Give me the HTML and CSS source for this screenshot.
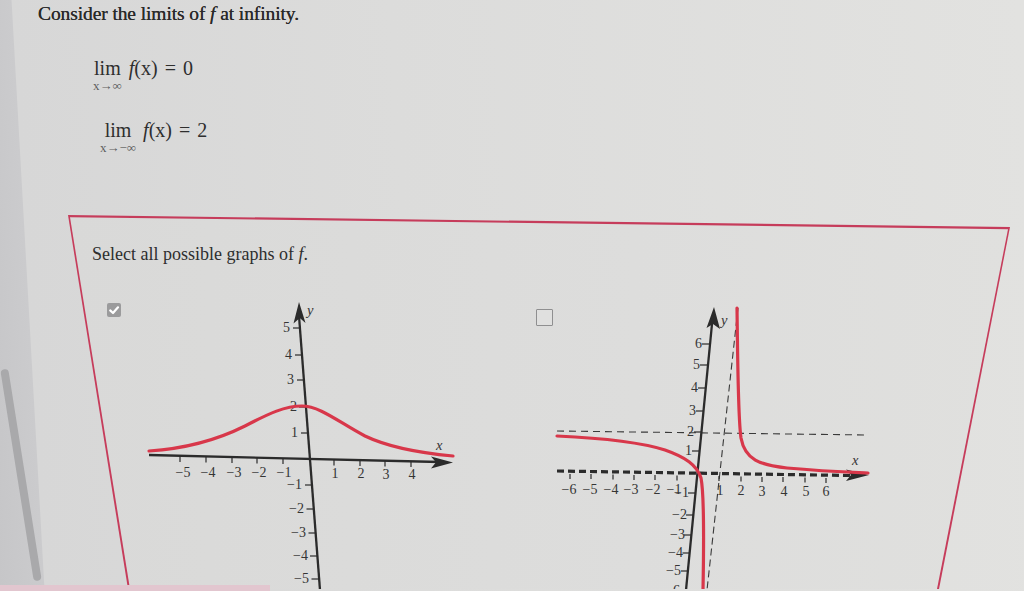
FILE: index.html
```html
<!DOCTYPE html>
<html>
<head>
<meta charset="utf-8">
<link rel="stylesheet" href="styles.css">
</head>
<body>
<div class="screen">
  <aside class="sidebar"><div class="thumb"></div></aside>
  <main class="main">
    <p class="title">Consider the limits of <i>f</i> at infinity.</p>
    <div class="limit l1">
      <span class="lim"><span class="lim-word">lim</span><span class="sub">x→∞</span></span>
      <span class="expr"><i>f</i>(x) = 0</span>
    </div>
    <div class="limit l2">
      <span class="lim"><span class="lim-word">lim</span><span class="sub">x→−∞</span></span>
      <span class="expr"><i>f</i>(x) = 2</span>
    </div>
    <section class="box">
      <p class="prompt">Select all possible graphs of <i>f</i>.</p>
      <div class="options">
        <div class="option o1">
          <span class="cb checked"><svg viewBox="0 0 14 14" width="14" height="14"><path d="M3.2 7.4 L6 10 L11 4.3" fill="none" stroke="#fff" stroke-width="2.2" stroke-linecap="round" stroke-linejoin="round"/></svg></span>
          <svg class="graph" viewBox="140 295 330 296" width="330" height="296">
            <g stroke="#2b2b2b" fill="#2b2b2b">
              <line x1="299" y1="318" x2="320" y2="592" stroke-width="2.3"/>
              <path d="M299,304 L305.5,325 L299.8,320 L293.5,325.5 Z" stroke="none"/>
              <line x1="149" y1="457" x2="440" y2="464" stroke-width="2.3"/>
              <path d="M453,464.5 L431,458.5 L436,464.2 L431,470.5 Z" stroke="none"/>
              <g stroke-width="1.2">
                <line x1="180" y1="458" x2="180" y2="464"/>
                <line x1="206" y1="458.5" x2="206" y2="464.5"/>
                <line x1="232" y1="459" x2="232" y2="465"/>
                <line x1="257" y1="459.5" x2="257" y2="465.5"/>
                <line x1="283" y1="460" x2="283" y2="466"/>
                <line x1="334" y1="461.5" x2="334" y2="467.5"/>
                <line x1="360" y1="462" x2="360" y2="468"/>
                <line x1="385" y1="462.5" x2="385" y2="468.5"/>
                <line x1="411" y1="463" x2="411" y2="469"/>
                <line x1="293" y1="330" x2="301" y2="330"/>
                <line x1="295" y1="357" x2="302.5" y2="357"/>
                <line x1="297" y1="382" x2="304.5" y2="382"/>
                <line x1="299" y1="409" x2="306.5" y2="409"/>
                <line x1="301" y1="435" x2="308.5" y2="435"/>
                <line x1="305" y1="487" x2="312.5" y2="487"/>
                <line x1="306.5" y1="511" x2="314" y2="511"/>
                <line x1="308.5" y1="535" x2="316" y2="535"/>
                <line x1="310" y1="558" x2="317.5" y2="558"/>
                <line x1="311.5" y1="581" x2="319" y2="581"/>
              </g>
            </g>
            <g text-anchor="middle">
              <text x="183" y="479">−5</text>
              <text x="208" y="479">−4</text>
              <text x="234" y="479">−3</text>
              <text x="259" y="479">−2</text>
              <text x="284" y="479">−1</text>
              <text x="335" y="480">1</text>
              <text x="361" y="480">2</text>
              <text x="386" y="481">3</text>
              <text x="412" y="481">4</text>
            </g>
            <g text-anchor="end">
              <text x="290" y="334">5</text>
              <text x="292" y="361">4</text>
              <text x="294" y="386">3</text>
              <text x="297" y="413">2</text>
              <text x="298" y="439">1</text>
              <text x="302" y="491">−1</text>
              <text x="304" y="515">−2</text>
              <text x="306" y="539">−3</text>
              <text x="308" y="562">−4</text>
              <text x="309" y="585">−5</text>
            </g>
            <text class="it" x="307" y="317">y</text>
            <text class="it" x="436" y="452">x</text>
            <path d="M149,453 C180,451 215,443 245,428 C270,415 285,408 302,408 C320,408 340,425 365,438 C390,450 420,455 453,458" fill="none" stroke="#d8374a" stroke-width="3.2" stroke-linecap="round"/>
          </svg>
        </div>
        <div class="option o2">
          <span class="cb"></span>
          <svg class="graph" viewBox="553 295 330 296" width="330" height="296">
            <g stroke="#3a3a3a" fill="none" stroke-width="1.1">
              <line x1="738" y1="310" x2="707" y2="592" stroke-dasharray="7 4"/>
              <line x1="557" y1="433" x2="868" y2="437" stroke-dasharray="7 5"/>
            </g>
            <g stroke="#2b2b2b" fill="#2b2b2b">
              <line x1="712" y1="326" x2="686" y2="592" stroke-width="2.3"/>
              <path d="M714,309 L720,331 L713,326 L706.5,330 Z" stroke="none"/>
              <line x1="557" y1="473" x2="850" y2="477.5" stroke-width="3.2" stroke-dasharray="7 4"/>
              <path d="M869,477 L846,471.5 L851,477 L846,483 Z" stroke="none"/>
              <g stroke-width="1.2">
                <line x1="570" y1="476" x2="570" y2="481"/>
                <line x1="591" y1="476" x2="591" y2="481"/>
                <line x1="613" y1="476.5" x2="613" y2="481.5"/>
                <line x1="634" y1="477" x2="634" y2="482"/>
                <line x1="655" y1="477" x2="655" y2="482"/>
                <line x1="677" y1="477.5" x2="677" y2="482.5"/>
                <line x1="719" y1="478" x2="719" y2="483"/>
                <line x1="741" y1="478.5" x2="741" y2="483.5"/>
                <line x1="762" y1="479" x2="762" y2="484"/>
                <line x1="783" y1="479" x2="783" y2="484"/>
                <line x1="805" y1="479.5" x2="805" y2="484.5"/>
                <line x1="826" y1="480" x2="826" y2="485"/>
                <line x1="702" y1="346" x2="709.5" y2="346"/>
                <line x1="700" y1="367" x2="707.5" y2="367"/>
                <line x1="698" y1="390" x2="705.5" y2="390"/>
                <line x1="696" y1="413" x2="703" y2="413"/>
                <line x1="694" y1="434" x2="701" y2="434"/>
                <line x1="692" y1="453" x2="699" y2="453"/>
                <line x1="688" y1="495" x2="695" y2="495"/>
                <line x1="686" y1="517" x2="693" y2="517"/>
                <line x1="684" y1="537" x2="691" y2="537"/>
                <line x1="682.5" y1="555" x2="689.5" y2="555"/>
                <line x1="681" y1="573" x2="688" y2="573"/>
              </g>
            </g>
            <g text-anchor="middle">
              <text x="569" y="496">−6</text>
              <text x="590" y="496">−5</text>
              <text x="611" y="496">−4</text>
              <text x="631" y="496">−3</text>
              <text x="653" y="496">−2</text>
              <text x="674" y="496">−1</text>
              <text x="720" y="497">1</text>
              <text x="741" y="497">2</text>
              <text x="762" y="498">3</text>
              <text x="784" y="498">4</text>
              <text x="806" y="498">5</text>
              <text x="826" y="498">6</text>
            </g>
            <g text-anchor="end">
              <text x="702" y="350">6</text>
              <text x="700" y="371">5</text>
              <text x="698" y="394">4</text>
              <text x="696" y="417">3</text>
              <text x="694" y="438">2</text>
              <text x="692" y="457">1</text>
              <text x="689" y="499">−1</text>
              <text x="687" y="521">−2</text>
              <text x="685" y="541">−3</text>
              <text x="683" y="559">−4</text>
              <text x="681" y="577">−5</text>
              <text x="680" y="597">−6</text>
            </g>
            <text class="it" x="721" y="327">y</text>
            <text class="it" x="852" y="467">x</text>
            <g fill="none" stroke="#d8374a" stroke-width="3.2" stroke-linecap="round">
              <path d="M557,438 C600,440 640,444 665,452 C685,459 697,467 701,480 C704,495 704,540 703,592"/>
              <path d="M737,310 C738,380 738,420 741,440 C745,462 760,467 787,470 C820,473 845,474 868,475"/>
            </g>
          </svg>
        </div>
      </div>
    </section>
  </main>
  <div class="bottom-strip"></div>
</div>
</body>
</html>
```

FILE: styles.css
```css
html, body {
  margin: 0;
  padding: 0;
}
body {
  width: 1024px;
  height: 591px;
  overflow: hidden;
  background: #dcdcdb;
  font-family: "Liberation Serif", "Times New Roman", serif;
  color: #2e2e2e;
}
.screen {
  position: relative;
  display: flex;
  width: 1024px;
  height: 591px;
  overflow: hidden;
  background: linear-gradient(86.8deg, #c6c6c8 0, #cbcbcd 44px, #d7d7d7 45px, #dcdcdb 40%, #e2e2e0 100%);
}
.sidebar {
  width: 30px;
  flex: none;
  position: relative;
}
.thumb {
  width: 8px;
  height: 214px;
  margin: 368px 0 0 17px;
  border-radius: 4px;
  background: #a9a9ab;
  transform: rotate(-9deg);
}
.main {
  flex: 1;
  padding: 3px 0 0 8px;
  min-width: 0;
}
.title {
  margin: 0;
  font-size: 19.5px;
  line-height: 22px;
  color: #2a2a2a;
  letter-spacing: -0.1px;
  text-shadow: 0 0 0.5px #2a2a2a;
}
.limit {
  display: flex;
  align-items: flex-start;
  gap: 7px;
  font-size: 20px;
  line-height: 22px;
  color: #2e2e2e;
}
.l1 {
  margin: 32px 0 0 55px;
}
.l2 {
  margin: 28px 0 0 62px;
}
.lim {
  display: flex;
  flex-direction: column;
  align-items: center;
}
.lim-word {
  line-height: 22px;
}
.sub {
  font-size: 13px;
  line-height: 10px;
  margin-top: 2px;
  color: #5e5e5e;
  white-space: nowrap;
}
.expr {
  line-height: 22px;
  word-spacing: 2px;
}
.box {
  position: relative;
  margin: 62px 0 0 30px;
  width: 944px;
  height: 380px;
  background: #c63c5b;
  clip-path: polygon(0 0, 942px 12px, 871px 374px, 60px 374px);
}
.box::before {
  content: "";
  position: absolute;
  inset: 0;
  background: linear-gradient(90deg, #d9d9d8, #dddddc 60%, #e0e0de);
  clip-path: polygon(2px 2.2px, 940px 14.2px, 869px 374px, 62px 374px);
}
.prompt {
  position: relative;
  margin: 0;
  padding: 28px 0 0 24px;
  font-size: 18px;
  line-height: 22px;
  color: #2e2e2e;
}
.options {
  position: relative;
  display: flex;
  gap: 66px;
  margin: 28px 0 0 39px;
}
.option {
  display: flex;
  align-items: flex-start;
}
.o1 {
  gap: 19px;
}
.o2 {
  gap: 0;
}
.cb {
  flex: none;
  box-sizing: border-box;
  display: block;
}
.cb.checked {
  width: 14px;
  height: 14px;
  margin-top: 10px;
  background: #9b9b9c;
  border-radius: 2px;
}
.cb.checked svg {
  display: block;
}
.o2 .cb {
  width: 17px;
  height: 17px;
  margin-top: 16px;
  border: 1.5px solid #8f8f90;
  border-radius: 1px;
  background: #e0e0df;
}
.graph {
  display: block;
  flex: none;
}
.graph text {
  font-family: "Liberation Serif", "Times New Roman", serif;
  font-size: 14px;
  fill: #353535;
}
.graph text.it {
  font-style: italic;
  font-size: 14.5px;
}
.bottom-strip {
  position: absolute;
  left: 0;
  bottom: 0;
  width: 270px;
  height: 6px;
  background: #e2c6cf;
}
```
